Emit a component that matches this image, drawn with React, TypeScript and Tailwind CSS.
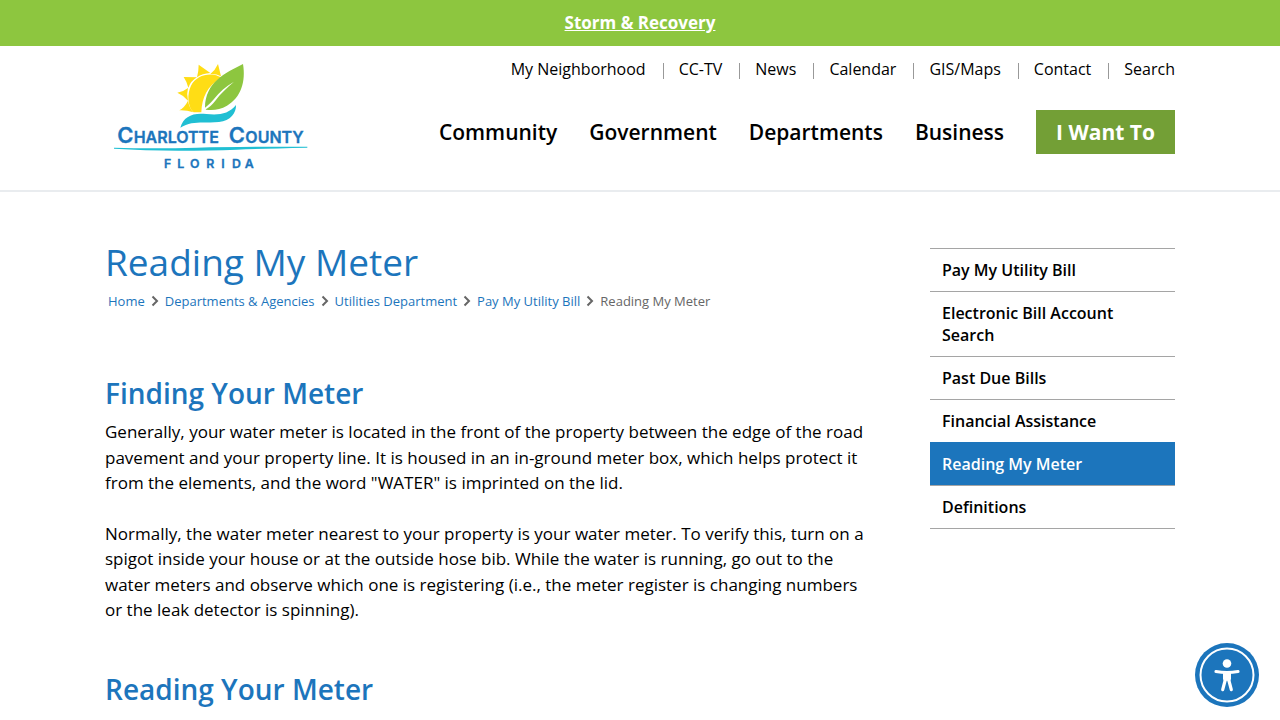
const topLinks = ["My Neighborhood", "CC-TV", "News", "Calendar", "GIS/Maps", "Contact", "Search"];

const mainLinks = ["Community", "Government", "Departments", "Business"];

const crumbs = ["Home", "Departments & Agencies", "Utilities Department", "Pay My Utility Bill"];

const sideLinks = [
  "Pay My Utility Bill",
  "Electronic Bill Account Search",
  "Past Due Bills",
  "Financial Assistance",
  "Reading My Meter",
  "Definitions",
];

const currentPage = "Reading My Meter";

function Logo() {
  return (
    <svg viewBox="0 0 630 375" className="h-[125px] w-[210px]" role="img" aria-label="Charlotte County Florida">
      {/* sun */}
      <g fill="#ffdd15">
        <path d="M289 172H266C247 155 246 116 258 92C271 66 300 55 326 59C337 61 345 65 350 68C306 93 291 126 289 172Z" />
        <path d="M281 29L316 54Q292 55 276 67Q281 48 281 29Z" />
        <path d="M339 27L348 64Q334 56 316 57Q331 45 339 27Z" />
        <path d="M236 66L276 67Q257 78 250 98Q246 81 236 66Z" />
        <path d="M217 113Q234 111 249 99Q244 118 249 137Q236 121 217 113Z" />
        <path d="M223 166Q239 157 249 137Q252 156 265 172Q244 165 223 166Z" />
      </g>
      {/* leaf */}
      <path d="M414 27C360 54 301 82 300 158L303 164C326 167 346 163 366 152C408 128 423 79 414 27Z" fill="#8dc63f" />
      <path d="M387 80C364 99 346 117 331 137C322 149 312 158 300 164V158C310 150 318 143 327 132C344 111 362 94 387 80Z" fill="#fff" />
      {/* water */}
      <path d="M226 218C235 184 264 172 304 177C343 181 371 177 393 150C394 174 377 197 342 201C304 206 263 194 226 218Z" fill="#20bfd3" />
      <path d="M27 278Q145 281 275 278T607 275V278Q475 281 395 284T220 287Q120 287 27 281Z" fill="#20bfd3" />
      <g fill="#1c75bc" className="font-['Inter'] font-semibold" stroke="#1c75bc" strokeWidth="1">
        <text x="37" y="265" fontSize="66">C</text>
        <text x="86" y="265" fontSize="48">HARLOTTE</text>
        <text x="371" y="265" fontSize="66">C</text>
        <text x="421" y="265" fontSize="48">OUNTY</text>
        <text x="177 217 255 304 349 381 419" y="339" fontSize="37">FLORIDA</text>
      </g>
    </svg>
  );
}

function Chevron() {
  return (
    <svg viewBox="0 0 8 12" className="h-3 w-2" fill="none" stroke="#666" strokeWidth="2" aria-hidden="true">
      <path d="M1.5 1.5L6 6L1.5 10.5" />
    </svg>
  );
}

function AccessibilityButton() {
  return (
    <button type="button" aria-label="Accessibility" className="fixed right-5 bottom-3 cursor-pointer">
      <svg viewBox="0 0 66 66" className="size-[66px]">
        <circle cx="33" cy="33" r="32" fill="#1c75bc" />
        <circle cx="33" cy="33" r="26.5" fill="none" stroke="#fff" strokeWidth="2" />
        <circle cx="33" cy="21.5" r="4.3" fill="#fff" />
        <path
          d="M22 29.5Q33 31.5 44 29.5M31.5 37L28.7 47.6M34.5 37L37.3 47.6"
          fill="none"
          stroke="#fff"
          strokeWidth="3.2"
          strokeLinecap="round"
        />
        <path d="M29 30H37V37L35 41L33 38L31 41L29 37Z" fill="#fff" />
      </svg>
    </button>
  );
}

export default function App() {
  return (
    <div className="min-h-screen bg-white font-['Open_Sans',sans-serif] text-black">
      <div className="flex h-[46px] items-center justify-center bg-[#8dc63f]">
        <a href="#storm" className="text-[17px] font-bold text-white underline">
          Storm &amp; Recovery
        </a>
      </div>

      <header className="border-b-2 border-[#e9ecef]">
        <div className="mx-auto flex max-w-[1070px] justify-between pt-[9px] pb-[10px]">
          <a href="#home">
            <Logo />
          </a>
          <div className="flex flex-col items-end gap-[29px] pt-[2px]">
            <nav aria-label="Secondary" className="flex items-center">
              {topLinks.map((label) => (
                <div key={label} className="group flex items-center">
                  <a href="#top" className="text-base leading-6">
                    {label}
                  </a>
                  <span className="mt-[3px] mr-[15px] ml-[17px] h-4 w-px bg-[#999] group-last:hidden" />
                </div>
              ))}
            </nav>
            <nav aria-label="Main" className="flex items-center gap-8 text-[21px] leading-8">
              {mainLinks.map((label) => (
                <a key={label} href="#main" className="font-semibold">
                  {label}
                </a>
              ))}
              <button type="button" className="h-11 cursor-pointer bg-[#739f36] px-5 font-bold text-white">
                I Want To
              </button>
            </nav>
          </div>
        </div>
      </header>

      <div className="mx-auto flex max-w-[1070px] items-start justify-between gap-[60px] pt-14">
        <main className="max-w-[765px] flex-1 pb-12">
          <h1 className="text-[37px] leading-7 text-[#1c75bc]">{currentPage}</h1>
          <nav aria-label="Breadcrumb" className="mt-[15px] flex items-center gap-[6px] pl-[3px] text-[13px] leading-5">
            {crumbs.map((label) => (
              <span key={label} className="flex items-center gap-[6px]">
                <a href="#crumb" className="text-[#1c75bc]">
                  {label}
                </a>
                <Chevron />
              </span>
            ))}
            <span className="text-[#666]">{currentPage}</span>
          </nav>

          <section className="mt-16">
            <h2 className="text-[28px] leading-9 font-semibold text-[#1c75bc]">Finding Your Meter</h2>
            <div className="mt-2 space-y-[25px] text-[17px] leading-normal">
              <p>
                Generally, your water meter is located in the front of the property between the edge of the road
                pavement and your property line. It is housed in an in-ground meter box, which helps protect it from
                the elements, and the word "WATER" is imprinted on the lid.
              </p>
              <p>
                Normally, the water meter nearest to your property is your water meter. To verify this, turn on a
                spigot inside your house or at the outside hose bib. While the water is running, go out to the water
                meters and observe which one is registering (i.e., the meter register is changing numbers or the leak
                detector is spinning).
              </p>
            </div>
          </section>

          <section className="mt-12">
            <h2 className="text-[28px] leading-9 font-semibold text-[#1c75bc]">Reading Your Meter</h2>
          </section>
        </main>

        <nav aria-label="Section" className="w-[245px] border-t border-[#a5a5a5]">
          {sideLinks.map((label) => (
            <a
              key={label}
              href="#section"
              aria-current={label === currentPage ? "page" : undefined}
              className="block border-b border-[#a5a5a5] px-3 py-[10px] text-base leading-[22px] font-semibold aria-[current=page]:-mt-px aria-[current=page]:bg-[#1c75bc] aria-[current=page]:pt-[11px] aria-[current=page]:text-white"
            >
              {label}
            </a>
          ))}
        </nav>
      </div>

      <AccessibilityButton />
    </div>
  );
}
